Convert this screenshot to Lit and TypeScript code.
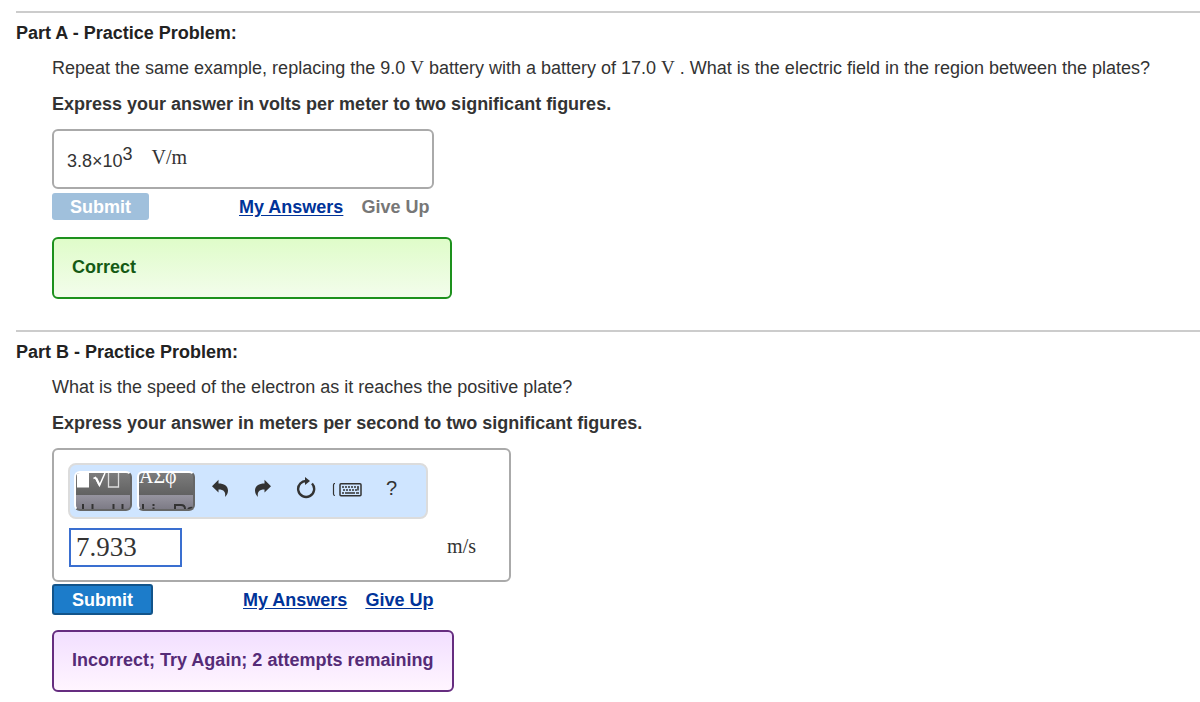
import { LitElement, html, css } from "lit";
import { customElement, state } from "lit/decorators.js";

@customElement("formula-toolbar")
class FormulaToolbar extends LitElement {
  static styles = css`
    :host { display: block; }
    .bar {
      display: flex; align-items: center; box-sizing: border-box;
      width: 360px; max-width: 100%; height: 56px; padding: 0 4px;
      border: 2px solid #dcdcdc; border-radius: 8px; background: #cfe5ff;
    }
    button { font: inherit; color: #333; border: 0; padding: 0; margin: 0; background: none; cursor: pointer; }
    .palettes { display: flex; gap: 5px; padding-right: 3px; }
    .palette {
      display: flex; flex-direction: column; box-sizing: border-box; flex: none;
      width: 58px; height: 40px; overflow: hidden;
      border: 2px solid; border-color: #fff #666 #666 #fff; border-radius: 6px;
      background: linear-gradient(#7c7c7c, #616161 22px, #96949f 22px, #7d7b86);
    }
    .glyphs {
      height: 22px; display: flex; align-items: flex-start; overflow: hidden;
      font: 20px/6px "Liberation Serif", serif; color: #fff;
    }
    .pic { display: block; flex: none; }
    .tools { display: flex; align-items: center; padding-bottom: 7px; }
    .tool { width: 43px; height: 30px; display: grid; place-items: center; }
    .key { align-items: end; }
    .help { font: 20px/22px "Liberation Sans", Arial, sans-serif; }
  `;
  render() {
    return html`<div class="bar" role="toolbar" aria-label="Formula tools">
      <div class="palettes">
        <button class="palette" aria-label="Templates">
          <svg class="pic" width="54" height="36" viewBox="0 0 54 36">
            <rect x="1" width="12" height="14.500" fill="#fff"/>
            <path d="M17.500 5.500l2-1 4 8L29 0" fill="none" stroke="#fff" stroke-width="1.500"/>
            <path d="M20 5l3.500 7" stroke="#fff" stroke-width="2.200"/>
            <path d="M32.500 0v14h10V0" fill="none" stroke="#ddd" stroke-width="1.300"/>
            <path d="M7 31v5M16.500 31v5M37.500 31v5M46.500 31v5" stroke="#333" stroke-width="2"/>
          </svg>
        </button>
        <button class="palette" aria-label="Symbols">
          <span class="glyphs">ΑΣφ</span>
          <svg class="pic" width="54" height="14" viewBox="0 0 54 14">
            <path d="M4 9v5M14.500 9v2M14.500 12.500v1.500M36 14v-4h6q4 0 4 4M49 14q2-2 5-1" fill="none" stroke="#333" stroke-width="2"/>
          </svg>
        </button>
      </div>
      <div class="tools">
        <button class="tool" aria-label="Undo">
          <svg width="16" height="18" viewBox="0 0 16 18"><path d="M0 7.300L6.500.700V4.500C12 4.500 16 7 16 11.500 16 14 15 16 13 18 14 13 12 10.500 6.500 10.500v3z" fill="#333"/></svg>
        </button>
        <button class="tool" aria-label="Redo">
          <svg width="16" height="18" viewBox="0 0 16 18"><path d="M16 7.300L9.500.700V4.500C4 4.500 0 7 0 11.500 0 14 1 16 3 18 2 13 4 10.500 9.500 10.500v3z" fill="#333"/></svg>
        </button>
        <button class="tool" aria-label="Reset">
          <svg width="20" height="22" viewBox="0 0 20 22"><path d="M11 4A8 8 0 1 0 16 6.500" fill="none" stroke="#333" stroke-width="2.400"/><path d="M9 0l5 4-5 4z" fill="#333"/></svg>
        </button>
        <button class="tool key" aria-label="Keyboard">
          <svg width="36" height="20" viewBox="0 0 36 20"><path d="M4 .5Q2.500.500 2.500 2v9q0 1.500 1.500 1.500" fill="none" stroke="#333" stroke-width="1.200"/><rect x="9" y=".8" width="21" height="12" rx="1" fill="none" stroke="#333" stroke-width="1.500"/><path d="M11 4h17M12 7h14" stroke="#333" stroke-width="1.500" stroke-dasharray="2 1"/><path d="M11 10h2M14 10h10M25 10h3M27 4.500v3" stroke="#333" stroke-width="1.500"/></svg>
        </button>
        <button class="tool help" aria-label="Help">?</button>
      </div>
    </div>`;
  }
}

@customElement("app-root")
class AppRoot extends LitElement {
  @state() value = "7.933";
  static styles = css`
    :host {
      display: block; padding: 11px 0 10px 16px; color: #333; background: #fff;
      font: 18px/22px "Liberation Sans", Arial, sans-serif;
    }
    .part { border-top: 2px solid #ccc; padding-top: 9px; }
    .part + .part { margin-top: 31px; }
    h2 { margin: 0; font: inherit; font-weight: bold; color: #222; }
    .body { padding: 13px 16px 0 36px; }
    p { margin: 0 0 14px; }
    .ask { font-weight: bold; }
    .unit { font-family: "Liberation Serif", serif; font-size: 20px; padding-bottom: 4px; }
    .volt { font-family: "Liberation Serif", serif; font-size: 19px; line-height: 20px; }
    .box { box-sizing: border-box; border: 2px solid #aaa; border-radius: 6px; max-width: 100%; }
    .done { width: 382px; height: 60px; padding: 0 13px; display: flex; align-items: center; gap: 19px; }
    .result { padding-top: 4px; }
    sup { font-size: 18px; line-height: 0; vertical-align: 7px; }
    .entry { width: 459px; padding: 13px 14px; }
    .answer { display: flex; align-items: center; justify-content: space-between; padding: 9px 19px 0 1px; }
    .field {
      box-sizing: border-box; width: 113px; height: 39px; border: 2px solid #3a6fd0; padding: 0 5px;
      font: 27px/35px "Liberation Serif", serif; color: #333; background: #fff; outline: 0;
    }
    .actions { display: flex; align-items: center; gap: 18px; font-weight: bold; }
    .actions.a { margin-top: 4px; }
    .actions.b { margin-top: 2px; }
    .submit {
      box-sizing: border-box; font: inherit; font-weight: bold; color: #fff; border: 0; border-radius: 3px;
      background: #1c7cca; padding: 0; width: 97px; height: 27px; margin-right: 72px;
    }
    .submit:disabled { background: #a0c0dc; }
    .b .submit { width: 101px; height: 31px; border: 2px solid #12548a; }
    a { color: #003399; text-underline-offset: 2px; }
    .off { color: #777; }
    .note {
      box-sizing: border-box; width: 400px; max-width: 100%; height: 62px; padding: 17px 18px;
      border: 2px solid; border-radius: 6px; font-weight: bold;
    }
    .ok { margin-top: 17px; color: #145a14; border-color: #1d911d; background: linear-gradient(#dffcc9, #f3fdec); }
    .bad { margin-top: 15px; width: 402px; color: #552b77; border-color: #662d80; background: linear-gradient(#f2dfff, #fff5ff); white-space: nowrap; }
  `;
  render() {
    return html`
      <section class="part">
        <h2>Part A - Practice Problem:</h2>
        <div class="body">
          <p>Repeat the same example, replacing the 9.0 <span class="volt">V</span> battery with a battery of 17.0 <span class="volt">V</span> . What is the electric field in the region between the plates?</p>
          <p class="ask">Express your answer in volts per meter to two significant figures.</p>
          <div class="box done"><span class="result">3.8×10<sup>3</sup></span><span class="unit">V/m</span></div>
          <div class="actions a">
            <button class="submit" disabled>Submit</button>
            <a href="#answers-a">My Answers</a><span class="off">Give Up</span>
          </div>
          <div class="note ok" role="status">Correct</div>
        </div>
      </section>
      <section class="part">
        <h2>Part B - Practice Problem:</h2>
        <div class="body">
          <p>What is the speed of the electron as it reaches the positive plate?</p>
          <p class="ask"><label for="speed">Express your answer in meters per second to two significant figures.</label></p>
          <div class="box entry">
            <formula-toolbar></formula-toolbar>
            <div class="answer">
              <input class="field" id="speed" .value=${this.value}>
              <span class="unit">m/s</span>
            </div>
          </div>
          <div class="actions b">
            <button class="submit">Submit</button>
            <a href="#answers-b">My Answers</a><a href="#give-up">Give Up</a>
          </div>
          <div class="note bad" role="status">Incorrect; Try Again; 2 attempts remaining</div>
        </div>
      </section>`;
  }
}
